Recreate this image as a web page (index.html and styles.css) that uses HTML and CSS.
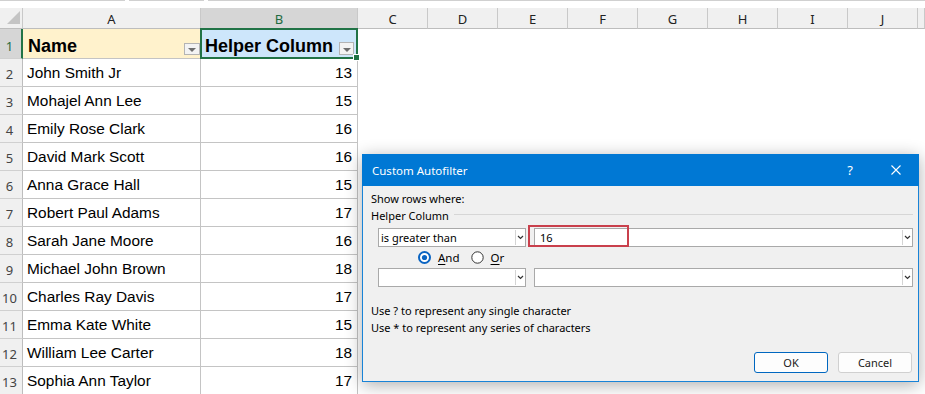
FILE: index.html
```html
<!DOCTYPE html>
<html>
<head>
<meta charset="utf-8">
<link rel="stylesheet" href="styles.css">
</head>
<body>
<div class="topbar"><span class="seg s1"></span><span class="seg s2"></span><span class="seg s3"></span></div>
<div class="sheet">
  <div class="ch corner"><svg class="tri" width="13" height="13" viewBox="0 0 13 13"><polygon points="0,13 13,0 13,13" fill="#c4c4c4"/></svg></div>
  <div class="ch">A</div>
  <div class="ch sel">B</div>
  <div class="ch">C</div>
  <div class="ch">D</div>
  <div class="ch">E</div>
  <div class="ch">F</div>
  <div class="ch">G</div>
  <div class="ch">H</div>
  <div class="ch">I</div>
  <div class="ch">J</div>
  <div class="ch"></div>

  <div class="rh sel">1</div>
  <div class="c hd a1"><span>Name</span><i class="filter f1"></i></div>
  <div class="c hd b1"><span>Helper Column</span><i class="filter f2"></i></div>
  <div class="rest"></div>

  <div class="rh">2</div><div class="c">John Smith Jr</div><div class="c num">13</div><div class="rest"></div>
  <div class="rh">3</div><div class="c">Mohajel Ann Lee</div><div class="c num">15</div><div class="rest"></div>
  <div class="rh">4</div><div class="c">Emily Rose Clark</div><div class="c num">16</div><div class="rest"></div>
  <div class="rh">5</div><div class="c">David Mark Scott</div><div class="c num">16</div><div class="rest"></div>
  <div class="rh">6</div><div class="c">Anna Grace Hall</div><div class="c num">15</div><div class="rest"></div>
  <div class="rh">7</div><div class="c">Robert Paul Adams</div><div class="c num">17</div><div class="rest"></div>
  <div class="rh">8</div><div class="c">Sarah Jane Moore</div><div class="c num">16</div><div class="rest"></div>
  <div class="rh">9</div><div class="c">Michael John Brown</div><div class="c num">18</div><div class="rest"></div>
  <div class="rh">10</div><div class="c">Charles Ray Davis</div><div class="c num">17</div><div class="rest"></div>
  <div class="rh">11</div><div class="c">Emma Kate White</div><div class="c num">15</div><div class="rest"></div>
  <div class="rh">12</div><div class="c">William Lee Carter</div><div class="c num">18</div><div class="rest"></div>
  <div class="rh">13</div><div class="c">Sophia Ann Taylor</div><div class="c num">17</div><div class="rest"></div>
</div>

<div class="dialog">
  <div class="titlebar">
    <span class="title">Custom Autofilter</span>
    <span class="help">?</span>
    <svg class="close" width="10" height="10" viewBox="0 0 10 10"><path d="M0.5 0.5 L9.5 9.5 M9.5 0.5 L0.5 9.5" stroke="#fff" stroke-width="1.1" fill="none"/></svg>
  </div>
  <div class="dbody">
    <div class="lbl">Show rows where:</div>
    <div class="group"><span>Helper Column</span><span class="rule"></span></div>
    <div class="crow">
      <div class="combo op"><span class="ctext">is greater than</span><span class="arrow"><svg width="7" height="5" viewBox="0 0 7 5"><polyline points="1,1 3.5,3.5 6,1" fill="none" stroke="#333" stroke-width="1.2"/></svg></span></div>
      <div class="combo val"><span class="ctext vtext">16</span><span class="arrow"><svg width="7" height="5" viewBox="0 0 7 5"><polyline points="1,1 3.5,3.5 6,1" fill="none" stroke="#333" stroke-width="1.2"/></svg></span><span class="mark"></span></div>
    </div>
    <div class="radios">
      <svg class="radio" width="13" height="13" viewBox="0 0 13 13"><circle cx="6.5" cy="6.5" r="5.5" fill="#fff" stroke="#0a64c2" stroke-width="2"/><circle cx="6.5" cy="6.5" r="2.6" fill="#0a64c2"/></svg>
      <span class="rlabel"><u>A</u>nd</span>
      <svg class="radio r2" width="13" height="13" viewBox="0 0 13 13"><circle cx="6.5" cy="6.5" r="5.7" fill="#fff" stroke="#333" stroke-width="1"/></svg>
      <span class="rlabel"><u>O</u>r</span>
    </div>
    <div class="crow">
      <div class="combo op"><span class="ctext"></span><span class="arrow"><svg width="7" height="5" viewBox="0 0 7 5"><polyline points="1,1 3.5,3.5 6,1" fill="none" stroke="#333" stroke-width="1.2"/></svg></span></div>
      <div class="combo val"><span class="ctext"></span><span class="arrow"><svg width="7" height="5" viewBox="0 0 7 5"><polyline points="1,1 3.5,3.5 6,1" fill="none" stroke="#333" stroke-width="1.2"/></svg></span></div>
    </div>
    <div class="hint first">Use ? to represent any single character</div>
    <div class="hint">Use * to represent any series of characters</div>
    <div class="btns"><span class="btn ok">OK</span><span class="btn">Cancel</span></div>
  </div>
</div>
</body>
</html>
```
FILE: styles.css
```css
html, body {
  margin: 0;
  padding: 0;
}
body {
  width: 925px;
  height: 394px;
  overflow: hidden;
  background: #fff;
  font-family: "Liberation Sans", Arial, sans-serif;
  position: relative;
}
.topbar {
  height: 8px;
  display: flex;
  gap: 4px;
  align-items: flex-start;
}
.seg {
  height: 1px;
  background: #d0d0d0;
}
.s1 { width: 125px; }
.s2 { width: 75px; }
.s3 { flex: 1; }

.sheet {
  display: grid;
  grid-template-columns: 23px 178px 157px repeat(8, 70px) 1fr;
  grid-template-rows: 21px 30px repeat(12, 28px);
}
.sheet > div {
  box-sizing: border-box;
  min-width: 0;
}
.ch {
  background: #f0f0f0;
  border-right: 1px solid #c9c9c9;
  border-bottom: 1px solid #bdbdbd;
  font-family: "Noto Sans", sans-serif;
  font-size: 13px;
  line-height: 20px;
  padding-top: 1px;
  text-align: center;
  color: #222;
}
.ch.sel {
  background: #d6d6d6;
  color: #1e6b40;
}
.corner {
  position: relative;
  padding: 0;
}
.corner .tri {
  display: block;
  margin: 3px 0 0 7px;
}
.rh {
  background: #f0f0f0;
  border-right: 1px solid #bdbdbd;
  border-bottom: 1px solid #d0d0d0;
  font-family: "Noto Sans", sans-serif;
  font-size: 13px;
  line-height: 16px;
  color: #444;
  display: flex;
  align-items: flex-end;
  justify-content: center;
  padding: 0 3px 4px 0;
}
.rh.sel {
  background: #d6d6d6;
  color: #1e6b40;
  border-right: 2px solid #217346;
  padding-right: 2px;
}
.c {
  border-right: 1px solid #c4c4c4;
  border-bottom: 1px solid #c4c4c4;
  display: flex;
  align-items: flex-end;
  padding: 0 4px 4px 4px;
  font-size: 15.4px;
  line-height: 18px;
  white-space: nowrap;
  color: #000;
}
.c.num {
  justify-content: flex-end;
  padding-right: 5px;
}
.c.hd {
  font-weight: bold;
  font-size: 18px;
  line-height: 21px;
  padding-bottom: 1px;
  justify-content: space-between;
}
.a1 {
  background: #fff2cc;
  padding-left: 5px;
  padding-right: 0;
}
.b1 {
  background: #cde6fb;
  padding-left: 4px;
  padding-right: 3px;
  position: relative;
}
.b1::after {
  content: "";
  position: absolute;
  left: -1px;
  top: -1px;
  right: -1px;
  bottom: -1px;
  border: 2px solid #217346;
}
.b1::before {
  content: "";
  position: absolute;
  right: -3px;
  bottom: -3px;
  width: 5px;
  height: 5px;
  background: #217346;
  border: 1px solid #fff;
  z-index: 2;
}
.filter {
  align-self: flex-end;
  margin-bottom: 2px;
  width: 16px;
  height: 12px;
  box-sizing: border-box;
  border: 1px solid #b4b4b4;
  background: #f3f3f3;
  position: relative;
  flex: none;
}
.filter.f2 { width: 15px; height: 13px; }
.filter::after {
  content: "";
  position: absolute;
  left: 50%;
  top: 50%;
  margin-left: -4px;
  margin-top: -1px;
  border-left: 4px solid transparent;
  border-right: 4px solid transparent;
  border-top: 4px solid #6e6e6e;
}
.rest {
  grid-column: 4 / -1;
  background: #fff;
}

/* dialog */
.dialog {
  position: absolute;
  left: 362px;
  top: 154px;
  width: 557px;
  height: 228px;
  box-sizing: border-box;
  border: 1px solid #1883d7;
  border-top: none;
  background: #f0f0f0;
  box-shadow: 0 3px 16px rgba(0, 0, 0, 0.32);
  font-family: "Noto Sans", sans-serif;
  font-size: 11px;
  color: #000;
}
.titlebar {
  height: 32px;
  margin: 0 -1px;
  background: #0078d4;
  display: flex;
  align-items: center;
  padding-left: 10px;
  color: #fff;
}
.title {
  flex: 1;
  font-size: 11.5px;
}
.help {
  width: 10px;
  text-align: center;
  font-size: 13px;
  margin-right: 36px;
}
.close {
  display: block;
  margin-right: 18px;
}
.dbody {
  padding: 5px 5px 0 8px;
}
.lbl {
  line-height: 16px;
}
.group {
  display: flex;
  align-items: center;
  line-height: 16px;
  margin-top: 1px;
}
.rule {
  flex: 1;
  height: 1px;
  background: #d6d6d6;
  margin-left: 5px;
  margin-top: -3px;
}
.crow {
  display: flex;
  gap: 8px;
  margin-top: 4px;
  margin-left: 7px;
}
.radios + .crow {
  margin-top: 0;
}
.combo {
  height: 19px;
  box-sizing: border-box;
  border: 1px solid #a9a9a9;
  background: #fff;
  display: flex;
  align-items: stretch;
  position: relative;
}
.combo.op { width: 148px; }
.combo.val { width: 379px; }
.ctext {
  flex: 1;
  padding-left: 2px;
  line-height: 17px;
  white-space: nowrap;
}
.vtext {
  padding-left: 5px;
}
.arrow {
  width: 9px;
  border-left: 1px solid #d4d4d4;
  margin: 1px 0;
  display: flex;
  align-items: center;
  justify-content: center;
}
.arrow svg {
  display: block;
}
.mark {
  position: absolute;
  left: -7px;
  top: -4px;
  width: 101px;
  height: 22px;
  box-sizing: border-box;
  border: 2px solid #c9404c;
}
.radios {
  display: flex;
  align-items: center;
  height: 20px;
  margin-bottom: 1px;
  padding-left: 47px;
}
.radio {
  display: block;
  flex: none;
}
.rlabel {
  margin-left: 7px;
  font-size: 11.5px;
}
.radio.r2 {
  margin-left: 11px;
}
.rlabel u {
  text-decoration: underline;
  text-underline-offset: 2px;
}
.hint {
  line-height: 17px;
}
.hint.first {
  margin-top: 15px;
}
.btns {
  display: flex;
  justify-content: flex-end;
  gap: 10px;
  margin-top: 16px;
  margin-right: 1px;
}
.btn {
  width: 74px;
  height: 21px;
  box-sizing: border-box;
  border: 1px solid #d0d0d0;
  border-radius: 3px;
  background: #fdfdfd;
  display: flex;
  align-items: center;
  justify-content: center;
  font-size: 11px;
  color: #1a1a1a;
}
.btn.ok {
  border-color: #0067c0;
}
```
